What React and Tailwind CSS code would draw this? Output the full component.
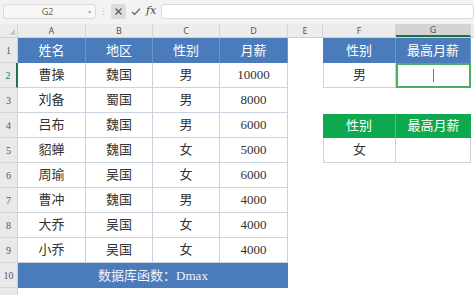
const cols = [
  { key: "A", w: "w-[68px]" },
  { key: "B", w: "w-[67px]" },
  { key: "C", w: "w-[67px]" },
  { key: "D", w: "w-[68px]" },
  { key: "E", w: "w-[35px]" },
  { key: "F", w: "w-[73px]" },
  { key: "G", w: "w-[75px]" },
];

const rows = [
  ["曹操", "魏国", "男", "10000"],
  ["刘备", "蜀国", "男", "8000"],
  ["吕布", "魏国", "男", "6000"],
  ["貂蝉", "魏国", "女", "5000"],
  ["周瑜", "吴国", "女", "6000"],
  ["曹冲", "魏国", "男", "4000"],
  ["大乔", "吴国", "女", "4000"],
  ["小乔", "吴国", "女", "4000"],
];

const serif = "font-['Liberation_Serif','Noto_Sans_CJK_SC',serif]";
const blueHead = "bg-[#4a7cbb] text-white border-r border-[#6f97c9]";
const cell = "border-r border-b border-[#c9d2de] bg-white text-[#333]";

function RowHead({ n, active }) {
  return (
    <div
      className={`w-[18px] shrink-0 flex items-center justify-center text-[10px] bg-[#e9e9e9] border-b border-[#d6d6d6] ${
        active ? "text-[#217346] border-r-2 border-r-[#217346]" : "text-[#555] border-r border-r-[#d0d0d0]"
      }`}
    >
      {n}
    </div>
  );
}

function Cell({ w, className = "", children }) {
  return (
    <div className={`${w} shrink-0 flex items-center justify-center ${className}`}>
      {children}
    </div>
  );
}

export default function App() {
  return (
    <div className="w-[474px] h-[295px] overflow-hidden bg-white font-['Noto_Sans','Noto_Sans_CJK_SC',sans-serif]">
      {/* formula bar */}
      <div className="h-[24px] bg-[#f3f3f3] flex items-start pt-[4px] pl-[3px]">
        <div className="w-[93px] h-[15px] rounded-[3px] border border-[#dadada] bg-[#f7f7f7] flex items-center relative">
          <span className="flex-1 text-center text-[9px] text-[#666] pr-[4px]">G2</span>
          <span className="absolute right-[4px] top-[3px] text-[6px] text-[#aaa]">▾</span>
        </div>
        <span className="ml-[3px] mt-[1px] text-[9px] text-[#bbb]">⋮</span>
        <div className="ml-[3px] w-[15px] h-[15px] bg-[#dcdcdc] rounded-[2px] flex items-center justify-center">
          <svg width="9" height="9" viewBox="0 0 9 9" className="stroke-[#555]" strokeWidth="1.1">
            <path d="M1.5 1.5l6 6M7.5 1.5l-6 6" />
          </svg>
        </div>
        <div className="ml-[3px] w-[14px] h-[15px] flex items-center justify-center">
          <svg width="10" height="9" viewBox="0 0 10 9" fill="none" className="stroke-[#555]" strokeWidth="1.1">
            <path d="M1 4.8l2.6 2.6L9 1.6" />
          </svg>
        </div>
        <span className="ml-[3px] mt-[-1px] text-[11px] italic text-[#444] font-['DejaVu_Serif',serif]">fx</span>
        <div className="ml-[5px] flex-1 h-[15px] rounded-[3px] border border-[#dadada] bg-white" />
      </div>

      {/* column headers */}
      <div className="h-[14px] flex bg-[#ececec] border-b border-[#d0d0d0]">
        <div className="w-[18px] shrink-0 relative border-r border-[#d6d6d6]">
          <div className="absolute right-[2px] bottom-[2px] w-0 h-0 border-l-[6px] border-l-transparent border-b-[6px] border-b-[#c6c6c6]" />
        </div>
        {cols.map((c) => (
          <Cell
            key={c.key}
            w={c.w}
            className={`text-[9px] text-[#555] border-r border-[#d6d6d6] ${
              c.key === "G" ? "bg-[#d4d4d4] border-b-2 border-b-[#217346]" : ""
            }`}
          >
            {c.key}
          </Cell>
        ))}
        <div className="flex-1" />
      </div>

      {/* row 1 */}
      <div className={`h-[25px] flex text-[13px] ${serif}`}>
        <RowHead n={1} />
        {["姓名", "地区", "性别", "月薪"].map((t, i) => (
          <Cell key={t} w={cols[i].w} className={blueHead}>
            {t}
          </Cell>
        ))}
        <Cell w={cols[4].w} />
        <Cell w={cols[5].w} className={blueHead}>性别</Cell>
        <Cell w={cols[6].w} className={blueHead}>最高月薪</Cell>
      </div>

      {rows.map((r, ri) => {
        const n = ri + 2;
        return (
          <div key={n} className={`h-[25px] flex text-[13px] ${serif}`}>
            <RowHead n={n} active={n === 2} />
            {r.map((t, i) => (
              <Cell key={i} w={cols[i].w} className={cell}>
                {t}
              </Cell>
            ))}
            <Cell w={cols[4].w} />
            {n === 2 && (
              <>
                <Cell w={cols[5].w} className={`${cell} border-l`}>男</Cell>
                <Cell w={cols[6].w} className="bg-white border-2 border-[#4caf64]">
                  <span className="w-px h-[13px] bg-[#777]" />
                </Cell>
              </>
            )}
            {n === 4 && (
              <>
                <Cell w={cols[5].w} className="bg-[#0ea84e] text-white border-r border-[#4cc37d] mt-[1px]">性别</Cell>
                <Cell w={cols[6].w} className="bg-[#0ea84e] text-white mt-[1px]">最高月薪</Cell>
              </>
            )}
            {n === 5 && (
              <>
                <Cell w={cols[5].w} className={`${cell} border-l`}>女</Cell>
                <Cell w={cols[6].w} className={cell} />
              </>
            )}
          </div>
        );
      })}

      {/* row 10 */}
      <div className={`h-[25px] flex text-[13px] ${serif}`}>
        <RowHead n={10} />
        <div className="w-[270px] shrink-0 bg-[#4a7cbb] text-[#f2f5fb] flex items-center justify-center">
          数据库函数：Dmax
        </div>
      </div>

      {/* row 11 */}
      <div className="h-[10px] flex">
        <RowHead n="" />
      </div>
    </div>
  );
}
